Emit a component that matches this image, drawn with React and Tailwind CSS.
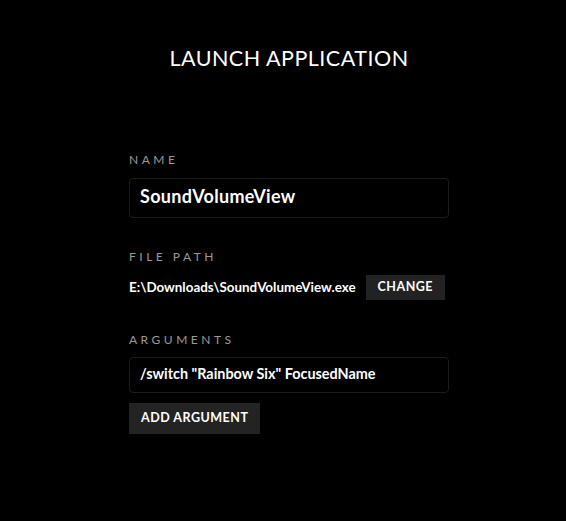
export default function App() {
  return (
    <div
      className="min-h-[521px] w-full bg-black text-white"
      style={{ fontFamily: "Lato, 'Open Sans', sans-serif" }}
    >
      <h1 className="pt-[44px] text-center text-[21.5px] leading-[28px] tracking-[0.5px] text-white pl-[12px]">
        LAUNCH APPLICATION
      </h1>

      <div className="ml-[129px] mt-[81px] w-[320px]">
        <label className="block text-[12px] leading-[14px] tracking-[3.5px] text-[#9a9a9a]">
          NAME
        </label>
        <div className="mt-[11px] flex h-[40px] items-center rounded-[4px] border border-[#1c1c1c] px-[10px] pb-[4px]">
          <span className="text-[18px] font-bold tracking-[0.3px]">SoundVolumeView</span>
        </div>

        <label className="mt-[32px] block text-[12px] leading-[14px] tracking-[3.5px] text-[#9a9a9a]">
          FILE PATH
        </label>
        <div className="mt-[11px] flex items-center gap-[10px]">
          <span className="text-[13.4px] font-bold">E:\Downloads\SoundVolumeView.exe</span>
          <button className="h-[25px] bg-[#222222] px-[12px] text-[12.5px] font-bold tracking-[0.5px]">
            CHANGE
          </button>
        </div>

        <label className="mt-[33px] block text-[12px] leading-[14px] tracking-[3.5px] text-[#9a9a9a]">
          ARGUMENTS
        </label>
        <div className="mt-[10px] flex h-[36px] items-center rounded-[4px] border border-[#1c1c1c] px-[10px] pb-[2px]">
          <span className="text-[14.4px] font-bold">/switch "Rainbow Six" FocusedName</span>
        </div>
        <button className="mt-[10px] h-[31px] bg-[#232323] px-[12px] text-[12.5px] font-bold tracking-[0.5px]">
          ADD ARGUMENT
        </button>
      </div>
    </div>
  );
}
